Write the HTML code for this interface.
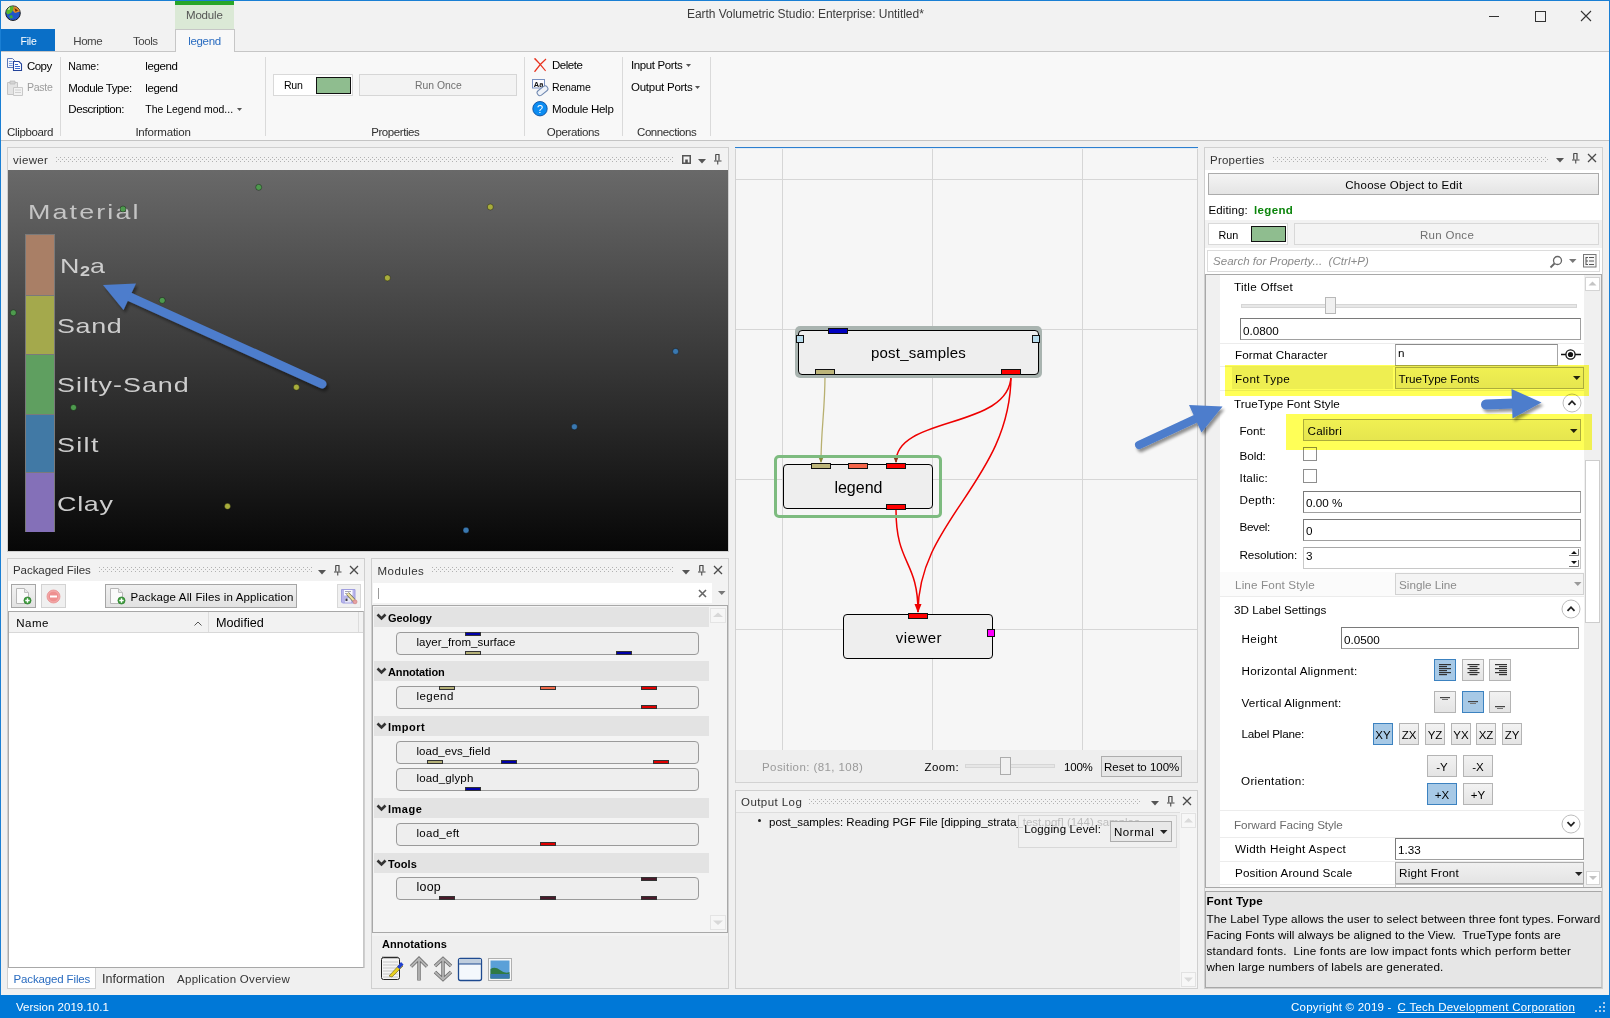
<!DOCTYPE html>
<html><head><meta charset="utf-8"><style>
html,body{margin:0;padding:0;}
body{width:1610px;height:1018px;overflow:hidden;position:relative;background:#f0f0f0;font-family:"Liberation Sans",sans-serif;}
.b{position:absolute;box-sizing:border-box;}
.t{position:absolute;white-space:pre;line-height:1;font-family:"Liberation Sans",sans-serif;}
svg{position:absolute;overflow:visible;}
.grip{position:absolute;background-image:radial-gradient(circle at 1px 1px,#a8a8a8 0.7px,transparent 0.9px),radial-gradient(circle at 3px 3px,#a8a8a8 0.7px,transparent 0.9px);background-size:4px 4px;}
</style></head><body>
<div class="b" style="left:0px;top:0px;width:1610px;height:1018px;background:#f0f0f0"></div>
<div class="b" style="left:1px;top:1px;width:1608px;height:50px;background:#f2f2f2"></div>
<div class="b" style="left:0px;top:0px;width:1610px;height:1px;background:#1a7fd4"></div>
<div class="b" style="left:0px;top:0px;width:1px;height:1018px;background:#1a7fd4"></div>
<div class="b" style="left:1609px;top:0px;width:1px;height:1018px;background:#1a7fd4"></div>
<svg style="left:5px;top:5px" width="16" height="16" viewBox="0 0 16 16">
<circle cx="8" cy="8.2" r="7.3" fill="#1f55c8" stroke="#111" stroke-width="0.9"/>
<path d="M1.2 7.5 A7 7 0 0 1 8 1 L9 4 L6 8 L2.5 9.5 Z" fill="#58b82a"/>
<path d="M2.5 4.5 A7 7 0 0 1 5 2 L4.5 5 Z" fill="#c8f0a0"/>
<path d="M8.5 1.2 A7 7 0 0 1 14.8 6.5 L10 8 L8 6 Z" fill="#e08a28"/>
<path d="M9.5 3 L13 5.5 L10.5 6.8 Z" fill="#6a2a08"/>
<path d="M4 11 L7 10 L8 13 L5.5 13.5 Z" fill="#3aa83a"/>
</svg>
<div class="t" id="t0" style="top:7.64px;font-size:12px;color:#3b3b3b;letter-spacing:-0.044px;left:687px;">Earth Volumetric Studio: Enterprise: Untitled*</div>
<div class="b" style="left:1489px;top:16px;width:10px;height:1px;background:#333"></div>
<div class="b" style="left:1535px;top:11px;width:11px;height:11px;border:1px solid #333"></div>
<svg style="left:1580px;top:10px" width="12" height="12" viewBox="0 0 12 12"><path d="M1 1 L11 11 M11 1 L1 11" stroke="#333" stroke-width="1.1"/></svg>
<div class="b" style="left:175px;top:1px;width:59px;height:4px;background:#29a629"></div>
<div class="b" style="left:175px;top:5px;width:59px;height:24px;background:#dbe9d6"></div>
<div class="t" id="t1" style="top:10.02px;font-size:11.5px;color:#555;letter-spacing:-0.184px;left:186px;">Module</div>
<div class="b" style="left:1px;top:51px;width:1608px;height:1px;background:#c6c6c6"></div>
<div class="b" style="left:1px;top:29px;width:54px;height:22px;background:#0a6fc7"></div>
<div class="t" id="t2" style="top:35.74px;font-size:10.58px;color:#fff;letter-spacing:-0.250px;left:20.5px;">File</div>
<div class="t" id="t3" style="top:35.72px;font-size:11.5px;color:#444;letter-spacing:-0.462px;left:73.3px;">Home</div>
<div class="t" id="t4" style="top:35.72px;font-size:11.5px;color:#444;letter-spacing:-0.440px;left:133px;">Tools</div>
<div class="b" style="left:175px;top:29px;width:60px;height:23px;background:#f8f8f8;border:1px solid #c6c6c6;border-bottom:none"></div>
<div class="t" id="t5" style="top:35.72px;font-size:11.5px;color:#2a6cc0;letter-spacing:-0.349px;left:188.3px;">legend</div>
<div class="b" style="left:1px;top:52px;width:1608px;height:88px;background:#f8f8f8"></div>
<div class="b" style="left:1px;top:140px;width:1608px;height:1px;background:#c4c4c4"></div>
<div class="b" style="left:60px;top:57px;width:1px;height:79px;background:#dadada"></div>
<div class="b" style="left:265px;top:57px;width:1px;height:79px;background:#dadada"></div>
<div class="b" style="left:524px;top:57px;width:1px;height:79px;background:#dadada"></div>
<div class="b" style="left:622px;top:57px;width:1px;height:79px;background:#dadada"></div>
<div class="b" style="left:710px;top:57px;width:1px;height:79px;background:#dadada"></div>
<svg style="left:7px;top:58px" width="16" height="14" viewBox="0 0 16 14">
<path d="M0.5 0.5 H5.5 L7.5 2.5 V9.5 H0.5 Z" fill="#f4f7fc" stroke="#5a78b8"/>
<path d="M2 3.5 H5.5 M2 5.5 H5.5 M2 7.5 H5.5" stroke="#7fa0e0"/>
<path d="M6.5 3.5 H12 L14.5 6 V12.5 H6.5 Z" fill="#fff" stroke="#23439a" stroke-width="1.1"/>
<path d="M8 6.5 H11 M8 8.5 H13 M8 10.5 H13" stroke="#3a6ad0"/>
</svg>
<div class="t" id="t6" style="top:60.62px;font-size:11.5px;color:#000;letter-spacing:-0.553px;left:27px;">Copy</div>
<svg style="left:7px;top:80px" width="17" height="16" viewBox="0 0 17 16">
<path d="M0.5 2.5 H10.5 V14.5 H0.5 Z" fill="#e4e4e4" stroke="#c4c4c4"/>
<path d="M3 1 H8 V4 H3 Z" fill="#d4d4d4" stroke="#bdbdbd" stroke-width="0.8"/>
<path d="M6.5 7.5 H15.5 V15.5 H6.5 Z" fill="#f2f2f2" stroke="#c8c8c8"/>
<path d="M8 10 H14 M8 12.5 H14" stroke="#d0d0d0"/>
</svg>
<div class="t" id="t7" style="top:82.04px;font-size:10.58px;color:#9c9c9c;letter-spacing:-0.317px;left:27px;">Paste</div>
<div class="t" id="t8" style="top:127.02px;font-size:11.5px;color:#2e2e2e;letter-spacing:-0.342px;left:7px;">Clipboard</div>
<div class="t" id="t9" style="top:61.34px;font-size:10.58px;color:#000;letter-spacing:-0.091px;left:68.3px;">Name:</div>
<div class="t" id="t10" style="top:61.32px;font-size:11.5px;color:#000;letter-spacing:-0.409px;left:145.3px;">legend</div>
<div class="t" id="t11" style="top:82.92px;font-size:11.5px;color:#000;letter-spacing:-0.449px;left:68.3px;">Module Type:</div>
<div class="t" id="t12" style="top:82.92px;font-size:11.5px;color:#000;letter-spacing:-0.409px;left:145.3px;">legend</div>
<div class="t" id="t13" style="top:104.02px;font-size:11.5px;color:#000;letter-spacing:-0.411px;left:68.3px;">Description:</div>
<div class="t" id="t14" style="top:105.05px;font-size:10.46px;color:#000;letter-spacing:-0.001px;left:145.3px;">The Legend mod...</div>
<svg style="left:237px;top:108px" width="6" height="4" viewBox="0 0 6 4"><path d="M0 0 H5 L2.5 3 Z" fill="#555"/></svg>
<div class="t" id="t15" style="top:127.02px;font-size:11.5px;color:#2e2e2e;letter-spacing:-0.213px;left:135.4px;">Information</div>
<div class="b" style="left:273px;top:74px;width:80px;height:22px;background:#fff;border:1px solid #d9d9d9"></div>
<div class="t" id="t16" style="top:80.24px;font-size:10.58px;color:#000;letter-spacing:-0.310px;left:284px;">Run</div>
<div class="b" style="left:316px;top:77px;width:35px;height:17px;background:#8fbd8f;border:1px solid #111"></div>
<div class="b" style="left:359px;top:74px;width:158px;height:22px;background:#f3f3f3;border:1px solid #d6d6d6"></div>
<div class="t" id="t17" style="top:81.20px;font-size:10.39px;color:#707070;letter-spacing:0.002px;left:415px;">Run Once</div>
<div class="t" id="t18" style="top:127.02px;font-size:11.5px;color:#2e2e2e;letter-spacing:-0.425px;left:371.2px;">Properties</div>
<svg style="left:533px;top:58px" width="15" height="15" viewBox="0 0 15 15"><path d="M0.8 0.8 Q6 5.5 12.2 13.2 L13 12.4 Q7 5 2.3 0 Z M12.6 0.6 Q6 6 0.9 13.6 L2.2 14 Q7.5 6.5 13.4 1.6 Z" fill="#e8321e"/></svg>
<div class="t" id="t19" style="top:59.92px;font-size:11.5px;color:#000;letter-spacing:-0.490px;left:552px;">Delete</div>
<svg style="left:532px;top:79px" width="17" height="17" viewBox="0 0 17 17">
<rect x="0.5" y="0.5" width="12" height="8.5" fill="#fbfbff" stroke="#7890c0"/>
<text x="1.8" y="7.6" font-size="7.5" font-family="Liberation Sans" font-weight="bold" fill="#111">Aa</text>
<rect x="4.5" y="9" width="12" height="5.5" rx="2.5" transform="rotate(-38 10.5 11.75)" fill="#eef2f8" stroke="#7088b0"/>
</svg>
<div class="t" id="t20" style="top:81.74px;font-size:10.58px;color:#000;letter-spacing:-0.238px;left:552px;">Rename</div>
<svg style="left:532px;top:101px" width="17" height="17" viewBox="0 0 17 17">
<circle cx="8" cy="7.7" r="7.2" fill="#0b8cf2" stroke="#0f4f9e" stroke-width="0.9"/>
<text x="8" y="12" font-size="11" font-family="Liberation Sans" fill="#fff" text-anchor="middle">?</text>
</svg>
<div class="t" id="t21" style="top:104.02px;font-size:11.5px;color:#000;letter-spacing:-0.278px;left:552px;">Module Help</div>
<div class="t" id="t22" style="top:127.02px;font-size:11.5px;color:#2e2e2e;letter-spacing:-0.363px;left:546.8px;">Operations</div>
<div class="t" id="t23" style="top:59.92px;font-size:11.5px;color:#000;letter-spacing:-0.383px;left:631px;">Input Ports</div>
<svg style="left:686px;top:64px" width="6" height="4" viewBox="0 0 6 4"><path d="M0 0 H5 L2.5 3 Z" fill="#555"/></svg>
<div class="t" id="t24" style="top:81.72px;font-size:11.5px;color:#000;letter-spacing:-0.251px;left:631px;">Output Ports</div>
<svg style="left:695px;top:86px" width="6" height="4" viewBox="0 0 6 4"><path d="M0 0 H5 L2.5 3 Z" fill="#555"/></svg>
<div class="t" id="t25" style="top:127.02px;font-size:11.5px;color:#2e2e2e;letter-spacing:-0.414px;left:637px;">Connections</div>
<svg style="left:0;top:0" width="0" height="0"><defs><pattern id="gp" x="0" y="0" width="4" height="4" patternUnits="userSpaceOnUse"><rect x="0" y="0" width="1" height="1" fill="#b2b2b2"/><rect x="2" y="2" width="1" height="1" fill="#b2b2b2"/></pattern></defs></svg>
<div class="b" style="left:7px;top:147px;width:722px;height:405px;background:#f2f2f2;border:1px solid #cfcfcf"></div>
<div class="t" id="t26" style="top:155.02px;font-size:11.5px;color:#333;letter-spacing:0.313px;left:13px;">viewer</div>
<svg style="left:56px;top:157px" width="617" height="5"><rect width="617" height="5" fill="url(#gp)"/></svg>
<svg style="left:682px;top:155px" width="9" height="9" viewBox="0 0 9 9"><rect x="0.75" y="0.75" width="7.5" height="7.5" fill="none" stroke="#555" stroke-width="1.5"/><rect x="3.2" y="4.5" width="2.6" height="4" fill="#555"/></svg>
<svg style="left:698px;top:159px" width="9" height="5" viewBox="0 0 9 5"><path d="M0 0 H8 L4 4.5 Z" fill="#555"/></svg>
<svg style="left:714px;top:154px" width="8" height="11" viewBox="0 0 8 11"><path d="M1.5 0.5 H5.5 M1.75 0.5 V6.5 M5 0.5 V6.5" stroke="#4a4a4a" stroke-width="1.2" fill="none"/><path d="M0 7 H7.5 M3.75 7 V10.5" stroke="#4a4a4a" stroke-width="1.1"/></svg>
<div class="b" style="left:8px;top:170px;width:720px;height:381px;background:linear-gradient(#696969,#070707)"></div>
<div class="b" style="left:25px;top:234px;width:30px;height:298px;background:#7a7a7a"></div>
<div class="b" style="left:26px;top:235px;width:28px;height:59.5px;background:#a97f66"></div>
<div class="b" style="left:26px;top:295.5px;width:28px;height:58.0px;background:#a4a94c"></div>
<div class="b" style="left:26px;top:354.5px;width:28px;height:59.0px;background:#5f9f60"></div>
<div class="b" style="left:26px;top:414.5px;width:28px;height:57.5px;background:#4179a5"></div>
<div class="b" style="left:26px;top:473px;width:28px;height:58.5px;background:#8470b8"></div>
<div class="t" id="t27" style="top:201.02px;font-size:21px;color:#c4c4c4;letter-spacing:1.661px;transform:scaleX(1.28);transform-origin:0 0;left:28.3px;">Material</div>
<div class="t" id="t28" style="top:255.02px;font-size:21px;color:#cdcdcd;transform:scaleX(1.28);transform-origin:0 0;left:59.9px;">N</div>
<div class="t" id="t29" style="top:264.05px;font-size:14px;color:#cdcdcd;transform:scaleX(1.28);transform-origin:0 0;left:80px;font-weight:bold">2</div>
<div class="t" id="t30" style="top:255.02px;font-size:21px;color:#cdcdcd;transform:scaleX(1.28);transform-origin:0 0;left:90px;">a</div>
<div class="t" id="t31" style="top:315.02px;font-size:21px;color:#cdcdcd;letter-spacing:0.526px;transform:scaleX(1.28);transform-origin:0 0;left:57.4px;">Sand</div>
<div class="t" id="t32" style="top:374.02px;font-size:21px;color:#cdcdcd;letter-spacing:0.806px;transform:scaleX(1.28);transform-origin:0 0;left:57.4px;">Silty-Sand</div>
<div class="t" id="t33" style="top:433.62px;font-size:21px;color:#cdcdcd;letter-spacing:1.052px;transform:scaleX(1.28);transform-origin:0 0;left:57.4px;">Silt</div>
<div class="t" id="t34" style="top:493.02px;font-size:21px;color:#cdcdcd;letter-spacing:0.578px;transform:scaleX(1.28);transform-origin:0 0;left:57.4px;">Clay</div>
<svg style="left:0;top:0" width="1610" height="1018"><circle cx="258.7" cy="187.3" r="3" fill="#4e9a4e" stroke="rgba(0,0,0,0.45)" stroke-width="0.8"/><circle cx="490.3" cy="207" r="3" fill="#a8ad3c" stroke="rgba(0,0,0,0.45)" stroke-width="0.8"/><circle cx="387.4" cy="277.9" r="3" fill="#a8ad3c" stroke="rgba(0,0,0,0.45)" stroke-width="0.8"/><circle cx="162.2" cy="300.4" r="3" fill="#4e9a4e" stroke="rgba(0,0,0,0.45)" stroke-width="0.8"/><circle cx="13.3" cy="312.8" r="3" fill="#4e9a4e" stroke="rgba(0,0,0,0.45)" stroke-width="0.8"/><circle cx="296.4" cy="387.2" r="3" fill="#a8ad3c" stroke="rgba(0,0,0,0.45)" stroke-width="0.8"/><circle cx="675.6" cy="351.4" r="3" fill="#3a78b0" stroke="rgba(0,0,0,0.45)" stroke-width="0.8"/><circle cx="73.5" cy="407.5" r="3" fill="#4e9a4e" stroke="rgba(0,0,0,0.45)" stroke-width="0.8"/><circle cx="574.4" cy="426.8" r="3" fill="#3a78b0" stroke="rgba(0,0,0,0.45)" stroke-width="0.8"/><circle cx="227.5" cy="506.3" r="3" fill="#a8ad3c" stroke="rgba(0,0,0,0.45)" stroke-width="0.8"/><circle cx="466" cy="530.2" r="3" fill="#3a78b0" stroke="rgba(0,0,0,0.45)" stroke-width="0.8"/><circle cx="123" cy="209" r="3" fill="#4e9a4e" stroke="rgba(0,0,0,0.45)" stroke-width="0.8"/></svg>
<div class="b" style="left:7px;top:558px;width:358px;height:410px;background:#f2f2f2;border:1px solid #cfcfcf"></div>
<div class="t" id="t35" style="top:565.42px;font-size:11.5px;color:#333;letter-spacing:-0.063px;left:13px;">Packaged Files</div>
<svg style="left:99px;top:567px" width="213" height="5"><rect width="213" height="5" fill="url(#gp)"/></svg>
<svg style="left:318px;top:570px" width="9" height="5" viewBox="0 0 9 5"><path d="M0 0 H8 L4 4.5 Z" fill="#555"/></svg>
<svg style="left:334px;top:565px" width="8" height="11" viewBox="0 0 8 11"><path d="M1.5 0.5 H5.5 M1.75 0.5 V6.5 M5 0.5 V6.5" stroke="#4a4a4a" stroke-width="1.2" fill="none"/><path d="M0 7 H7.5 M3.75 7 V10.5" stroke="#4a4a4a" stroke-width="1.1"/></svg>
<svg style="left:349px;top:565px" width="10" height="10" viewBox="0 0 10 10"><path d="M1 1 L9 9 M9 1 L1 9" stroke="#4a4a4a" stroke-width="1.3"/></svg>
<div class="b" style="left:8px;top:581px;width:356px;height:30px;background:#fff"></div>
<div class="b" style="left:11px;top:584px;width:25px;height:24px;background:linear-gradient(#f2f2f2,#e2e2e2);border:1px solid #a6a6a6"></div>
<svg style="left:16px;top:588px" width="16" height="17" viewBox="0 0 16 17">
<path d="M0.5 0.5 H8.5 L12.5 4.5 V15.5 H0.5 Z" fill="#fafafa" stroke="#b8b8b8"/>
<path d="M8.5 0.5 V4.5 H12.5" fill="#e8e8e8" stroke="#c0c0c0"/>
<circle cx="11.5" cy="12.5" r="3.6" fill="#3a9a3a" stroke="#2a7a2a" stroke-width="0.6"/>
<path d="M11.5 10.3 V14.7 M9.3 12.5 H13.7" stroke="#fff" stroke-width="1.4"/>
</svg>
<div class="b" style="left:41px;top:584px;width:25px;height:24px;background:#f0f0f0;border:1px solid #d2d2d2"></div>
<svg style="left:46px;top:589px" width="15" height="15" viewBox="0 0 15 15">
<circle cx="7.5" cy="7.5" r="6.5" fill="#f2a6a6" stroke="#e89090" stroke-width="0.8"/>
<circle cx="7.5" cy="7.5" r="4.8" fill="#ee8f8f"/>
<rect x="4" y="6.5" width="7" height="2" fill="#fff"/>
</svg>
<div class="b" style="left:105px;top:584px;width:192px;height:24px;background:linear-gradient(#f0f0f0,#e2e2e2);border:1px solid #a6a6a6"></div>
<svg style="left:110px;top:588px" width="16" height="17" viewBox="0 0 16 17">
<path d="M0.5 0.5 H8.5 L12.5 4.5 V15.5 H0.5 Z" fill="#fafafa" stroke="#b8b8b8"/>
<path d="M8.5 0.5 V4.5 H12.5" fill="#e8e8e8" stroke="#c0c0c0"/>
<circle cx="11.5" cy="12.5" r="3.6" fill="#3a9a3a" stroke="#2a7a2a" stroke-width="0.6"/>
<path d="M11.5 10.3 V14.7 M9.3 12.5 H13.7" stroke="#fff" stroke-width="1.4"/>
</svg>
<div class="t" id="t36" style="top:591.72px;font-size:11.5px;color:#000;letter-spacing:0.144px;left:130.4px;">Package All Files in Application</div>
<div class="b" style="left:337px;top:584px;width:24px;height:24px;background:#f0f0f0;border:1px solid #d8d8d8"></div>
<svg style="left:341px;top:589px" width="17" height="16" viewBox="0 0 17 16">
<path d="M0.5 0.5 H14 V13 L13 14 H1.5 L0.5 13 Z" fill="#b8b6ec" stroke="#a09ee0"/>
<rect x="3" y="1" width="8.5" height="5.5" fill="#fcfcff"/>
<path d="M4 2.5 H10 M4 4.5 H7" stroke="#9090a8" stroke-width="0.8"/>
<rect x="4" y="9" width="6" height="4.5" fill="#e6e6f6"/>
<rect x="4.5" y="9.5" width="2" height="2.5" fill="#404050"/>
<path d="M6.5 4.5 L13 11.5" stroke="#6a6a50" stroke-width="3.6"/>
<path d="M6.5 4.5 L13 11.5" stroke="#eee0a0" stroke-width="2.4"/>
<circle cx="14" cy="12.8" r="2" fill="#e8a0a0" stroke="#c87878" stroke-width="0.6"/>
</svg>
<div class="b" style="left:8px;top:611px;width:356px;height:357px;background:#fff;border:1px solid #a8a8a8;border-right-color:#c8c8c8"></div>
<div class="b" style="left:9px;top:612px;width:354px;height:20px;background:#f2f2f2"></div>
<div class="b" style="left:9px;top:632px;width:354px;height:1px;background:#d8d8d8"></div>
<div class="t" id="t37" style="top:618.02px;font-size:11.5px;color:#000;letter-spacing:0.537px;left:16.2px;">Name</div>
<svg style="left:194px;top:621px" width="8" height="5" viewBox="0 0 8 5"><path d="M0.5 4.5 L4 1 L7.5 4.5" stroke="#555" fill="none" stroke-width="1"/></svg>
<div class="b" style="left:208px;top:612px;width:1px;height:20px;background:#dcdcdc"></div>
<div class="b" style="left:358px;top:612px;width:1px;height:20px;background:#dcdcdc"></div>
<div class="t" id="t38" style="top:616.74px;font-size:12.65px;color:#000;letter-spacing:-0.002px;left:216px;">Modified</div>
<div class="b" style="left:7px;top:968px;width:89px;height:21px;background:#fff;border:1px solid #d0d0d0;border-top:none"></div>
<div class="t" id="t39" style="top:974.02px;font-size:11.5px;color:#2a6cc0;letter-spacing:-0.140px;left:13.5px;">Packaged Files</div>
<div class="t" id="t40" style="top:973.03px;font-size:12.55px;color:#333;letter-spacing:0.002px;left:102px;">Information</div>
<div class="t" id="t41" style="top:974.02px;font-size:11.5px;color:#333;letter-spacing:0.285px;left:177px;">Application Overview</div>
<div class="b" style="left:371px;top:558px;width:358px;height:431px;background:#f2f2f2;border:1px solid #cfcfcf"></div>
<div class="t" id="t42" style="top:565.82px;font-size:11.5px;color:#333;letter-spacing:0.472px;left:377.5px;">Modules</div>
<svg style="left:432px;top:567px" width="241" height="5"><rect width="241" height="5" fill="url(#gp)"/></svg>
<svg style="left:682px;top:570px" width="9" height="5" viewBox="0 0 9 5"><path d="M0 0 H8 L4 4.5 Z" fill="#555"/></svg>
<svg style="left:698px;top:565px" width="8" height="11" viewBox="0 0 8 11"><path d="M1.5 0.5 H5.5 M1.75 0.5 V6.5 M5 0.5 V6.5" stroke="#4a4a4a" stroke-width="1.2" fill="none"/><path d="M0 7 H7.5 M3.75 7 V10.5" stroke="#4a4a4a" stroke-width="1.1"/></svg>
<svg style="left:713px;top:565px" width="10" height="10" viewBox="0 0 10 10"><path d="M1 1 L9 9 M9 1 L1 9" stroke="#4a4a4a" stroke-width="1.3"/></svg>
<div class="b" style="left:373px;top:583px;width:339px;height:20px;background:#fff"></div>
<div class="b" style="left:378px;top:588px;width:1px;height:11px;background:#9a9a9a"></div>
<svg style="left:698px;top:589px" width="9" height="9" viewBox="0 0 9 9"><path d="M1 1 L8 8 M8 1 L1 8" stroke="#666" stroke-width="1.6"/></svg>
<svg style="left:718px;top:591px" width="8" height="5" viewBox="0 0 8 5"><path d="M0 0 H7.5 L3.75 4 Z" fill="#777"/></svg>
<div class="b" style="left:372px;top:605px;width:356px;height:328px;background:#f4f4f4;border:1px solid #a8a8a8"></div>
<div class="b" style="left:374px;top:607px;width:335px;height:20px;background:#e3e3e3"></div>
<svg style="left:376px;top:613px" width="11" height="8" viewBox="0 0 11 8"><path d="M1.5 1.5 L5.5 5.5 L9.5 1.5" stroke="#333" stroke-width="2.6" fill="none"/></svg>
<div class="t" id="t43" style="top:613.04px;font-size:11px;color:#000;font-weight:bold;letter-spacing:-0.036px;left:388px;">Geology</div>
<div class="b" style="left:396px;top:632px;width:303px;height:23px;background:#eeeeee;border:1px solid #9a9a9a;border-radius:4px"></div>
<div class="t" id="t44" style="top:637.02px;font-size:11.5px;color:#000;letter-spacing:0.021px;left:416.5px;">layer_from_surface</div>
<div class="b" style="left:465px;top:632px;width:16px;height:4px;background:#0000a8;border:1px solid #333"></div>
<div class="b" style="left:465px;top:651px;width:16px;height:4px;background:#b4b078;border:1px solid #333"></div>
<div class="b" style="left:616px;top:651px;width:16px;height:4px;background:#0000a8;border:1px solid #333"></div>
<div class="b" style="left:374px;top:661px;width:335px;height:20px;background:#e3e3e3"></div>
<svg style="left:376px;top:667px" width="11" height="8" viewBox="0 0 11 8"><path d="M1.5 1.5 L5.5 5.5 L9.5 1.5" stroke="#333" stroke-width="2.6" fill="none"/></svg>
<div class="t" id="t45" style="top:667.04px;font-size:11px;color:#000;font-weight:bold;letter-spacing:-0.139px;left:388px;">Annotation</div>
<div class="b" style="left:396px;top:686px;width:303px;height:23px;background:#eeeeee;border:1px solid #9a9a9a;border-radius:4px"></div>
<div class="t" id="t46" style="top:691.02px;font-size:11.5px;color:#000;letter-spacing:0.451px;left:416.5px;">legend</div>
<div class="b" style="left:439px;top:686px;width:16px;height:4px;background:#b4b078;border:1px solid #333"></div>
<div class="b" style="left:540px;top:686px;width:16px;height:4px;background:#f06a4a;border:1px solid #333"></div>
<div class="b" style="left:641px;top:686px;width:16px;height:4px;background:#e00000;border:1px solid #333"></div>
<div class="b" style="left:641px;top:705px;width:16px;height:4px;background:#e00000;border:1px solid #333"></div>
<div class="b" style="left:374px;top:716px;width:335px;height:20px;background:#e3e3e3"></div>
<svg style="left:376px;top:722px" width="11" height="8" viewBox="0 0 11 8"><path d="M1.5 1.5 L5.5 5.5 L9.5 1.5" stroke="#333" stroke-width="2.6" fill="none"/></svg>
<div class="t" id="t47" style="top:722.04px;font-size:11px;color:#000;font-weight:bold;letter-spacing:0.513px;left:388px;">Import</div>
<div class="b" style="left:396px;top:741px;width:303px;height:23px;background:#eeeeee;border:1px solid #9a9a9a;border-radius:4px"></div>
<div class="t" id="t48" style="top:746.02px;font-size:11.5px;color:#000;letter-spacing:0.021px;left:416.5px;">load_evs_field</div>
<div class="b" style="left:427px;top:760px;width:16px;height:4px;background:#b4b078;border:1px solid #333"></div>
<div class="b" style="left:501px;top:760px;width:16px;height:4px;background:#0000a8;border:1px solid #333"></div>
<div class="b" style="left:653px;top:760px;width:16px;height:4px;background:#e00000;border:1px solid #333"></div>
<div class="b" style="left:396px;top:768px;width:303px;height:23px;background:#eeeeee;border:1px solid #9a9a9a;border-radius:4px"></div>
<div class="t" id="t49" style="top:773.02px;font-size:11.5px;color:#000;letter-spacing:0.129px;left:416.5px;">load_glyph</div>
<div class="b" style="left:465px;top:787px;width:16px;height:4px;background:#0000a8;border:1px solid #333"></div>
<div class="b" style="left:374px;top:798px;width:335px;height:20px;background:#e3e3e3"></div>
<svg style="left:376px;top:804px" width="11" height="8" viewBox="0 0 11 8"><path d="M1.5 1.5 L5.5 5.5 L9.5 1.5" stroke="#333" stroke-width="2.6" fill="none"/></svg>
<div class="t" id="t50" style="top:804.04px;font-size:11px;color:#000;font-weight:bold;letter-spacing:0.501px;left:388px;">Image</div>
<div class="b" style="left:396px;top:823px;width:303px;height:23px;background:#eeeeee;border:1px solid #9a9a9a;border-radius:4px"></div>
<div class="t" id="t51" style="top:828.02px;font-size:11.5px;color:#000;letter-spacing:0.266px;left:416.5px;">load_eft</div>
<div class="b" style="left:540px;top:842px;width:16px;height:4px;background:#e00000;border:1px solid #333"></div>
<div class="b" style="left:374px;top:853px;width:335px;height:20px;background:#e3e3e3"></div>
<svg style="left:376px;top:859px" width="11" height="8" viewBox="0 0 11 8"><path d="M1.5 1.5 L5.5 5.5 L9.5 1.5" stroke="#333" stroke-width="2.6" fill="none"/></svg>
<div class="t" id="t52" style="top:859.04px;font-size:11px;color:#000;font-weight:bold;letter-spacing:0.071px;left:388px;">Tools</div>
<div class="b" style="left:396px;top:877px;width:303px;height:23px;background:#eeeeee;border:1px solid #9a9a9a;border-radius:4px"></div>
<div class="t" id="t53" style="top:881.04px;font-size:12.42px;color:#000;letter-spacing:0.270px;left:416.5px;">loop</div>
<div class="b" style="left:641px;top:877px;width:16px;height:4px;background:#4a1a2a;border:1px solid #333"></div>
<div class="b" style="left:439px;top:896px;width:16px;height:4px;background:#4a1a2a;border:1px solid #333"></div>
<div class="b" style="left:540px;top:896px;width:16px;height:4px;background:#4a1a2a;border:1px solid #333"></div>
<div class="b" style="left:641px;top:896px;width:16px;height:4px;background:#4a1a2a;border:1px solid #333"></div>
<div class="b" style="left:710px;top:608px;width:16px;height:15px;background:#f6f6f6;border:1px solid #e4e4e4"></div>
<svg style="left:710px;top:608px" width="16" height="15" viewBox="0 0 16 15"><path d="M3 9 L8 4.5 L13 9 Z" fill="#d8d8d8"/></svg>
<div class="b" style="left:710px;top:915px;width:16px;height:15px;background:#f6f6f6;border:1px solid #e4e4e4"></div>
<svg style="left:710px;top:915px" width="16" height="15" viewBox="0 0 16 15"><path d="M3 5.5 L8 10 L13 5.5 Z" fill="#d8d8d8"/></svg>
<div class="b" style="left:372px;top:936px;width:356px;height:52px;background:#efefef"></div>
<div class="t" id="t54" style="top:939.04px;font-size:11px;color:#000;font-weight:bold;letter-spacing:0.063px;left:382px;">Annotations</div>
<svg style="left:380px;top:955px" width="140" height="27" viewBox="0 0 140 27">
<rect x="1.5" y="2.5" width="18" height="22" rx="2" fill="#f4f4f4" stroke="#222"/>
<path d="M3 7 H18 M3 10 H18 M3 13 H18 M3 16 H18 M3 19 H18 M3 22 H18" stroke="#bbb" stroke-width="0.8"/>
<path d="M2.5 2.5 H18.5" stroke="#333" stroke-width="2" stroke-dasharray="1 1"/>
<path d="M9 21 L20 9 L23 11 L12 22 Z" fill="#e8d020" stroke="#554400" stroke-width="0.5"/>
<path d="M17 12 L21 7 L23.5 9.5 L19.5 14 Z" fill="#2040d0"/>
<path d="M31 11.5 L39 3.5 L47 11.5 M39 4 V25.5" stroke="#6a6a6a" stroke-width="3.4" fill="none"/><path d="M31 11.5 L39 3.5 L47 11.5 M39 4 V25.5" stroke="#b4b4b4" stroke-width="1.8" fill="none"/>
<path d="M55 11 L63 3.5 L71 11 M55 17 L63 24.5 L71 17 M63 4 V24" stroke="#6a6a6a" stroke-width="3.4" fill="none"/><path d="M55 11 L63 3.5 L71 11 M55 17 L63 24.5 L71 17 M63 4 V24" stroke="#b4b4b4" stroke-width="1.8" fill="none"/>
<rect x="78.5" y="3.5" width="23" height="22" rx="2" fill="#f4f8fc" stroke="#1e4a90" stroke-width="1.3"/>
<rect x="79" y="4" width="22" height="5" fill="#c0cede"/>
<path d="M79 9 H101" stroke="#1e4a90"/>
<rect x="108.5" y="3.5" width="23" height="22" fill="#f8f8f8" stroke="#b0b0b0"/>
<rect x="110.5" y="5.5" width="19" height="18" fill="#5aa0d8"/>
<path d="M110.5 14 Q115 11 120 15 T129.5 17 V23.5 H110.5 Z" fill="#2f7a45"/>
<rect x="110.5" y="19" width="19" height="4.5" fill="#3878b0"/>
</svg>
<div class="b" style="left:735px;top:147px;width:463px;height:636px;background:#f6f6f6;border:1px solid #d2d2d2;border-top:none"></div>
<div class="b" style="left:735px;top:147px;width:463px;height:1px;background:#2b7fd0"></div>
<div class="b" style="left:735px;top:148px;width:463px;height:1px;background:#e2ebf3"></div>
<svg style="left:0;top:0" width="1610" height="1018"><rect x="782" y="149" width="1" height="601" fill="#d6d6d6"/><rect x="932" y="149" width="1" height="601" fill="#d6d6d6"/><rect x="1082" y="149" width="1" height="601" fill="#d6d6d6"/><rect x="736" y="179" width="461" height="1" fill="#d6d6d6"/><rect x="736" y="329" width="461" height="1" fill="#d6d6d6"/><rect x="736" y="479" width="461" height="1" fill="#d6d6d6"/><rect x="736" y="629" width="461" height="1" fill="#d6d6d6"/></svg>
<div class="b" style="left:736px;top:750px;width:461px;height:32px;background:#eeeeee"></div>
<div class="t" id="t55" style="top:762.02px;font-size:11.5px;color:#9a9a9a;letter-spacing:0.414px;left:762px;">Position: (81, 108)</div>
<div class="t" id="t56" style="top:762.02px;font-size:11.5px;color:#000;letter-spacing:0.402px;left:924.6px;">Zoom:</div>
<div class="b" style="left:965px;top:764px;width:90px;height:4px;background:#e6e6e6;border:1px solid #d6d6d6"></div>
<div class="b" style="left:1000px;top:757px;width:11px;height:18px;background:#f0f0f0;border:1px solid #acacac"></div>
<div class="t" id="t57" style="top:762.02px;font-size:11.5px;color:#000;letter-spacing:-0.207px;left:1064px;">100%</div>
<div class="b" style="left:1101px;top:756px;width:81px;height:21px;background:#e6e6e6;border:1px solid #adadad"></div>
<div class="t" id="t58" style="top:762.02px;font-size:11.5px;color:#000;letter-spacing:-0.011px;left:1104px;">Reset to 100%</div>
<svg style="left:0;top:0" width="1610" height="1018">
<path d="M825 375 C825 410 821 430 821 462" stroke="#b8b070" stroke-width="1.3" fill="none"/>
<path d="M817.5 455 L821 463 L824.5 455 Z" fill="#8a8a3a"/>
<path d="M1011 375 C1011 430 896 415 896 462" stroke="#ee0000" stroke-width="1.5" fill="none"/>
<path d="M892.5 455 L896 463 L899.5 455 Z" fill="#8a3a1a"/>
<path d="M896 510 C896 565 918 560 918 612" stroke="#ee0000" stroke-width="1.5" fill="none"/>
<path d="M1011 375 C1011 480 918 520 918 612" stroke="#ee0000" stroke-width="1.5" fill="none"/>
<path d="M914.5 604 L918 613 L921.5 604 Z" fill="#ee0000"/>
</svg>
<div class="b" style="left:795px;top:326px;width:247px;height:52px;background:#a9b4b0;border-radius:5px"></div>
<div class="b" style="left:798px;top:329.5px;width:241px;height:45px;background:#eeeeee;border:1px solid #000;border-radius:4px"></div>
<div class="b" style="left:828px;top:328px;width:20px;height:6px;background:#0000c0;border:1px solid #111"></div>
<div class="b" style="left:815px;top:369px;width:20px;height:6px;background:#bdb57a;border:1px solid #111"></div>
<div class="b" style="left:1001px;top:369px;width:20px;height:6px;background:#ff0000;border:1px solid #111"></div>
<div class="b" style="left:796px;top:335px;width:8px;height:8px;background:#b8dcec;border:1px solid #111"></div>
<div class="b" style="left:1032px;top:335px;width:8px;height:8px;background:#b8dcec;border:1px solid #111"></div>
<div class="t" id="t59" style="top:345.00px;font-size:15px;color:#000;letter-spacing:0.203px;left:871px;">post_samples</div>
<div class="b" style="left:774px;top:455px;width:168px;height:63px;border:3.5px solid #7dbb7f;border-radius:5px"></div>
<div class="b" style="left:783px;top:464px;width:150px;height:45px;background:#eeeeee;border:1px solid #000;border-radius:4px"></div>
<div class="b" style="left:811px;top:463px;width:20px;height:6px;background:#bdb57a;border:1px solid #111"></div>
<div class="b" style="left:848px;top:463px;width:20px;height:6px;background:#f4664a;border:1px solid #111"></div>
<div class="b" style="left:886px;top:463px;width:20px;height:6px;background:#ff0000;border:1px solid #111"></div>
<div class="b" style="left:886px;top:504px;width:20px;height:6px;background:#ff0000;border:1px solid #111"></div>
<div class="t" id="t60" style="top:478.81px;font-size:16.05px;color:#000;letter-spacing:-0.000px;left:834.4px;">legend</div>
<div class="b" style="left:843px;top:614px;width:150px;height:45px;background:#eeeeee;border:1px solid #000;border-radius:4px"></div>
<div class="b" style="left:908px;top:613px;width:20px;height:6px;background:#ff0000;border:1px solid #111"></div>
<div class="b" style="left:987px;top:629px;width:8px;height:8px;background:#ff00ff;border:1px solid #111"></div>
<div class="t" id="t61" style="top:629.60px;font-size:15px;color:#000;letter-spacing:0.488px;left:895.8px;">viewer</div>
<div class="b" style="left:735px;top:790px;width:463px;height:199px;background:#f2f2f2;border:1px solid #cfcfcf"></div>
<div class="t" id="t62" style="top:797.02px;font-size:11.5px;color:#333;letter-spacing:0.433px;left:741px;">Output Log</div>
<svg style="left:809px;top:799px" width="332" height="5"><rect width="332" height="5" fill="url(#gp)"/></svg>
<svg style="left:1151px;top:801px" width="9" height="5" viewBox="0 0 9 5"><path d="M0 0 H8 L4 4.5 Z" fill="#555"/></svg>
<svg style="left:1167px;top:796px" width="8" height="11" viewBox="0 0 8 11"><path d="M1.5 0.5 H5.5 M1.75 0.5 V6.5 M5 0.5 V6.5" stroke="#4a4a4a" stroke-width="1.2" fill="none"/><path d="M0 7 H7.5 M3.75 7 V10.5" stroke="#4a4a4a" stroke-width="1.1"/></svg>
<svg style="left:1182px;top:796px" width="10" height="10" viewBox="0 0 10 10"><path d="M1 1 L9 9 M9 1 L1 9" stroke="#4a4a4a" stroke-width="1.3"/></svg>
<div class="b" style="left:736px;top:812px;width:444px;height:176px;background:#efefef"></div>
<div class="b" style="left:736px;top:812px;width:461px;height:1px;background:#dddddd"></div>
<div class="b" style="left:1180px;top:812px;width:17px;height:176px;background:#f5f5f5"></div>
<div class="b" style="left:1181px;top:813px;width:15px;height:15px;background:#f7f7f7;border:1px solid #e2e2e2"></div>
<svg style="left:1181px;top:813px" width="15" height="15" viewBox="0 0 15 15"><path d="M3 9.5 L7.5 5 L12 9.5 Z" fill="#dadada"/></svg>
<div class="b" style="left:1181px;top:972px;width:15px;height:15px;background:#f7f7f7;border:1px solid #e2e2e2"></div>
<svg style="left:1181px;top:972px" width="15" height="15" viewBox="0 0 15 15"><path d="M3 5.5 L7.5 10 L12 5.5 Z" fill="#dadada"/></svg>
<div class="b" style="left:758px;top:819px;width:3px;height:3px;background:#222;border-radius:50%"></div>
<div class="t" id="t63" style="top:817.42px;font-size:11.5px;color:#000;left:769px;">post_samples: Reading PGF File [dipping_strata_test.pgf] (144) samples</div>
<div class="b" style="left:1018px;top:815px;width:159px;height:33px;background:rgba(240,240,240,0.78);border:1px solid #d8d8d8"></div>
<div class="t" id="t64" style="top:824.02px;font-size:11.5px;color:#000;letter-spacing:0.153px;left:1024.2px;">Logging Level:</div>
<div class="b" style="left:1110px;top:821px;width:62px;height:21px;background:#e8e8e8;border:1px solid #adadad"></div>
<div class="t" id="t65" style="top:826.82px;font-size:11.5px;color:#000;letter-spacing:0.547px;left:1114px;">Normal</div>
<svg style="left:1160px;top:830px" width="8" height="5" viewBox="0 0 8 5"><path d="M0 0 H7.5 L3.75 4 Z" fill="#222"/></svg>
<div class="b" style="left:1204px;top:147px;width:399px;height:842px;background:#f2f2f2;border:1px solid #cfcfcf"></div>
<div class="t" id="t66" style="top:155.02px;font-size:11.5px;color:#333;letter-spacing:0.209px;left:1210px;">Properties</div>
<svg style="left:1273px;top:157px" width="275" height="5"><rect width="275" height="5" fill="url(#gp)"/></svg>
<svg style="left:1556px;top:158px" width="9" height="5" viewBox="0 0 9 5"><path d="M0 0 H8 L4 4.5 Z" fill="#555"/></svg>
<svg style="left:1572px;top:153px" width="8" height="11" viewBox="0 0 8 11"><path d="M1.5 0.5 H5.5 M1.75 0.5 V6.5 M5 0.5 V6.5" stroke="#4a4a4a" stroke-width="1.2" fill="none"/><path d="M0 7 H7.5 M3.75 7 V10.5" stroke="#4a4a4a" stroke-width="1.1"/></svg>
<svg style="left:1587px;top:153px" width="10" height="10" viewBox="0 0 10 10"><path d="M1 1 L9 9 M9 1 L1 9" stroke="#4a4a4a" stroke-width="1.3"/></svg>
<div class="b" style="left:1205px;top:170px;width:397px;height:104px;background:#fff"></div>
<div class="b" style="left:1208px;top:173px;width:391px;height:22px;background:linear-gradient(#f4f4f4,#e4e4e4);border:1px solid #ababab"></div>
<div class="t" id="t67" style="top:180.42px;font-size:11.5px;color:#000;letter-spacing:0.246px;left:1345.3px;">Choose Object to Edit</div>
<div class="t" id="t68" style="top:205.02px;font-size:11.5px;color:#000;letter-spacing:0.134px;left:1208.5px;">Editing:</div>
<div class="t" id="t69" style="top:205.02px;font-size:11.5px;color:#0b850b;font-weight:bold;letter-spacing:0.347px;left:1254px;">legend</div>
<div class="b" style="left:1205px;top:220px;width:397px;height:28px;background:#f2f2f2"></div>
<div class="b" style="left:1208px;top:223px;width:80px;height:22px;background:#fff;border:1px solid #d9d9d9"></div>
<div class="t" id="t70" style="top:230.02px;font-size:10.79px;color:#000;letter-spacing:-0.003px;left:1218.5px;">Run</div>
<div class="b" style="left:1251px;top:226px;width:35px;height:16px;background:#8fbd8f;border:1px solid #111"></div>
<div class="b" style="left:1294px;top:223px;width:305px;height:22px;background:#f4f4f4;border:1px solid #d8d8d8"></div>
<div class="t" id="t71" style="top:230.02px;font-size:11.5px;color:#707070;letter-spacing:0.288px;left:1420px;">Run Once</div>
<div class="b" style="left:1207px;top:250px;width:393px;height:22px;background:#fff;border:1px solid #dcdcdc"></div>
<div class="t" id="t72" style="top:256.02px;font-size:11.5px;color:#8a8a8a;font-style:italic;letter-spacing:0.033px;left:1213px;">Search for Property...  (Ctrl+P)</div>
<svg style="left:1549px;top:255px" width="14" height="14" viewBox="0 0 14 14"><circle cx="8.5" cy="5.5" r="4" fill="none" stroke="#666" stroke-width="1.3"/><path d="M5.5 8.5 L1.5 12.5" stroke="#666" stroke-width="1.8"/></svg>
<svg style="left:1569px;top:259px" width="8" height="5" viewBox="0 0 8 5"><path d="M0 0 H7.5 L3.75 4 Z" fill="#777"/></svg>
<svg style="left:1583px;top:254px" width="14" height="14" viewBox="0 0 14 14"><rect x="0.5" y="0.5" width="12.5" height="12.5" fill="#f6f6f6" stroke="#777"/><path d="M3 3 V11 M3 3.5 H5 M6 3.5 H11 M3 7 H5 M6 7 H11 M3 10.5 H5 M6 10.5 H11" stroke="#555" stroke-width="1"/></svg>
<div class="b" style="left:1205px;top:274px;width:397px;height:614px;background:#fff;border:1px solid #a8a8a8"></div>
<div class="b" style="left:1206px;top:275px;width:14px;height:612px;background:#f0f0f0"></div>
<div class="b" style="left:1584px;top:275px;width:17px;height:612px;background:#f0f0f0"></div>
<div class="b" style="left:1585px;top:277px;width:15px;height:14px;background:#fff;border:1px solid #d4d4d4"></div>
<svg style="left:1585px;top:277px" width="15" height="14" viewBox="0 0 15 14"><path d="M3.5 8.5 L7.5 4.5 L11.5 8.5 Z" fill="#c4c4c4"/></svg>
<div class="b" style="left:1585px;top:460px;width:15px;height:163px;background:#fff;border:1px solid #cdcdcd"></div>
<div class="b" style="left:1586px;top:871px;width:14px;height:14px;background:#fff;border:1px solid #d4d4d4"></div>
<svg style="left:1586px;top:871px" width="14" height="14" viewBox="0 0 14 14"><path d="M3 5 L7 9 L11 5 Z" fill="#c4c4c4"/></svg>
<div class="t" id="t73" style="top:280.65px;font-size:11.7px;color:#000;letter-spacing:0.267px;left:1234px;">Title Offset</div>
<div class="b" style="left:1241px;top:304px;width:336px;height:4px;background:#e7e7e7;border:1px solid #d6d6d6"></div>
<div class="b" style="left:1325px;top:297px;width:11px;height:17px;background:#f0f0f0;border:1px solid #b8b8b8"></div>
<div class="b" style="left:1240px;top:318px;width:341px;height:22px;background:#fff;border:1px solid #7a7a7a;border-right-color:#a0a0a0;border-bottom-color:#a0a0a0"></div>
<div class="t" id="t74" style="top:325.35px;font-size:11.7px;color:#000;left:1243px;">0.0800</div>
<div class="b" style="left:1220px;top:343px;width:364px;height:1px;background:#ececec"></div>
<div class="t" id="t75" style="top:349.05px;font-size:11.7px;color:#000;letter-spacing:0.061px;left:1235px;">Format Character</div>
<div class="b" style="left:1395px;top:344px;width:163px;height:22px;background:#fff;border:1px solid #a6a6a6;border-top-color:#8a8a8a"></div>
<div class="t" id="t76" style="top:347.05px;font-size:11.7px;color:#000;left:1398px;">n</div>
<svg style="left:1560px;top:348px" width="22" height="13" viewBox="0 0 22 13"><path d="M1 6.5 H21" stroke="#111" stroke-width="1.5"/><circle cx="10.5" cy="6.5" r="4.6" fill="#fff" stroke="#111" stroke-width="1.3"/><circle cx="10.5" cy="6.5" r="2.6" fill="#111"/></svg>
<div class="b" style="left:1220px;top:366px;width:364px;height:1px;background:#ececec"></div>
<div class="b" style="left:1232px;top:367px;width:161px;height:22px;background:#eeeeee"></div>
<div class="t" id="t77" style="top:372.75px;font-size:11.7px;color:#000;letter-spacing:0.379px;left:1235px;">Font Type</div>
<div class="b" style="left:1395px;top:367px;width:189px;height:22px;background:linear-gradient(#f0f0f0,#e6e6e6);border:1px solid #acacac"></div>
<div class="t" id="t78" style="top:372.65px;font-size:11.7px;color:#000;letter-spacing:-0.048px;left:1398.5px;">TrueType Fonts</div>
<svg style="left:1573px;top:376px" width="8" height="5" viewBox="0 0 8 5"><path d="M0 0 H7.5 L3.75 4 Z" fill="#222"/></svg>
<div class="b" style="left:1220px;top:389.5px;width:364px;height:1px;background:#ececec"></div>
<div class="t" id="t79" style="top:398.05px;font-size:11.7px;color:#000;letter-spacing:0.055px;left:1234px;">TrueType Font Style</div>
<svg style="left:1561.5px;top:393.2px" width="20" height="20" viewBox="-10 -10 20 20"><circle r="9" fill="#fff" stroke="#bdbdbd"/><path d="M-3.5 1.8 L0 -1.8 L3.5 1.8" stroke="#222" stroke-width="1.8" fill="none"/></svg>
<div class="t" id="t80" style="top:424.75px;font-size:11.7px;color:#000;letter-spacing:-0.085px;left:1239.5px;">Font:</div>
<div class="b" style="left:1303px;top:419px;width:278px;height:22px;background:linear-gradient(#f0f0f0,#e6e6e6);border:1px solid #acacac"></div>
<div class="t" id="t81" style="top:424.75px;font-size:11.7px;color:#000;letter-spacing:0.196px;left:1307.5px;">Calibri</div>
<svg style="left:1570px;top:429px" width="8" height="5" viewBox="0 0 8 5"><path d="M0 0 H7.5 L3.75 4 Z" fill="#222"/></svg>
<div class="t" id="t82" style="top:450.05px;font-size:11.7px;color:#000;letter-spacing:-0.085px;left:1239.5px;">Bold:</div>
<div class="b" style="left:1303px;top:447px;width:14px;height:14px;background:#fff;border:1px solid #8e8e8e"></div>
<div class="t" id="t83" style="top:471.65px;font-size:11.7px;color:#000;letter-spacing:0.170px;left:1239.5px;">Italic:</div>
<div class="b" style="left:1303px;top:469px;width:14px;height:14px;background:#fff;border:1px solid #8e8e8e"></div>
<div class="t" id="t84" style="top:493.65px;font-size:11.7px;color:#000;letter-spacing:0.272px;left:1239.5px;">Depth:</div>
<div class="b" style="left:1303px;top:491px;width:278px;height:22px;background:#fff;border:1px solid #7a7a7a;border-right-color:#a0a0a0;border-bottom-color:#a0a0a0"></div>
<div class="t" id="t85" style="top:496.85px;font-size:11.7px;color:#000;left:1306px;">0.00 %</div>
<div class="t" id="t86" style="top:521.45px;font-size:11.7px;color:#000;letter-spacing:-0.337px;left:1239.5px;">Bevel:</div>
<div class="b" style="left:1303px;top:519px;width:278px;height:22px;background:#fff;border:1px solid #7a7a7a;border-right-color:#a0a0a0;border-bottom-color:#a0a0a0"></div>
<div class="t" id="t87" style="top:525.05px;font-size:11.7px;color:#000;left:1306px;">0</div>
<div class="t" id="t88" style="top:549.25px;font-size:11.7px;color:#000;letter-spacing:-0.068px;left:1239.5px;">Resolution:</div>
<div class="b" style="left:1303px;top:547px;width:278px;height:22px;background:#fff;border:1px solid #c8c8c8;border-top-color:#a8a8a8"></div>
<div class="t" id="t89" style="top:549.55px;font-size:11.7px;color:#000;left:1306px;">3</div>
<svg style="left:1567px;top:548px" width="14" height="20" viewBox="0 0 14 20"><path d="M4 6 L7 3 L10 6 Z M4 13 L7 16 L10 13 Z" fill="#111"/><path d="M2 7.5 H11.5 V1 M2 18.5 H11.5 V12" stroke="#555" fill="none" stroke-width="0.8"/></svg>
<div class="b" style="left:1220px;top:571.5px;width:364px;height:1px;background:#ececec"></div>
<div class="b" style="left:1220px;top:572px;width:364px;height:24px;background:#fbfbfb"></div>
<div class="t" id="t90" style="top:578.85px;font-size:11.7px;color:#8c8c8c;letter-spacing:0.131px;left:1235px;">Line Font Style</div>
<div class="b" style="left:1395px;top:573px;width:189px;height:22px;background:#f4f4f4;border:1px solid #d2d2d2"></div>
<div class="t" id="t91" style="top:578.55px;font-size:11.7px;color:#8c8c8c;letter-spacing:-0.004px;left:1399px;">Single Line</div>
<svg style="left:1574px;top:582px" width="8" height="5" viewBox="0 0 8 5"><path d="M0 0 H7.5 L3.75 4 Z" fill="#9a9a9a"/></svg>
<div class="b" style="left:1220px;top:596px;width:364px;height:1px;background:#ececec"></div>
<div class="t" id="t92" style="top:604.15px;font-size:11.7px;color:#000;letter-spacing:0.002px;left:1234px;">3D Label Settings</div>
<svg style="left:1561.3px;top:598.9px" width="20" height="20" viewBox="-10 -10 20 20"><circle r="9" fill="#fff" stroke="#bdbdbd"/><path d="M-3.5 1.8 L0 -1.8 L3.5 1.8" stroke="#222" stroke-width="1.8" fill="none"/></svg>
<div class="t" id="t93" style="top:632.85px;font-size:11.7px;color:#000;letter-spacing:0.401px;left:1241.5px;">Height</div>
<div class="b" style="left:1341px;top:627px;width:238px;height:22px;background:#fff;border:1px solid #7a7a7a;border-right-color:#a0a0a0;border-bottom-color:#a0a0a0"></div>
<div class="t" id="t94" style="top:633.55px;font-size:11.7px;color:#000;left:1344px;">0.0500</div>
<div class="t" id="t95" style="top:664.75px;font-size:11.7px;color:#000;letter-spacing:0.268px;left:1241.5px;">Horizontal Alignment:</div>
<div class="t" id="t96" style="top:696.85px;font-size:11.7px;color:#000;letter-spacing:0.202px;left:1241.5px;">Vertical Alignment:</div>
<div class="t" id="t97" style="top:728.45px;font-size:11.7px;color:#000;letter-spacing:-0.199px;left:1241.5px;">Label Plane:</div>
<div class="t" id="t98" style="top:775.05px;font-size:11.7px;color:#000;letter-spacing:0.307px;left:1241px;">Orientation:</div>
<div class="b" style="left:1434px;top:659px;width:22px;height:22px;background:#a7c9e6;border:1px solid #3c82c0"></div>
<svg style="left:1434px;top:659px" width="22" height="22" viewBox="0 0 22 22"><rect x="5" y="5" width="12" height="1.2" fill="#333"/><rect x="5" y="7" width="8" height="1.2" fill="#333"/><rect x="5" y="9" width="12" height="1.2" fill="#333"/><rect x="5" y="11" width="8" height="1.2" fill="#333"/><rect x="5" y="13" width="12" height="1.2" fill="#333"/><rect x="5" y="15" width="8" height="1.2" fill="#333"/></svg>
<div class="b" style="left:1462px;top:659px;width:22px;height:22px;background:linear-gradient(#f2f2f2,#e4e4e4);border:1px solid #b4b4b4"></div>
<svg style="left:1462px;top:659px" width="22" height="22" viewBox="0 0 22 22"><rect x="5.5" y="5" width="12" height="1.2" fill="#333"/><rect x="7.5" y="7" width="8" height="1.2" fill="#333"/><rect x="5.5" y="9" width="12" height="1.2" fill="#333"/><rect x="7.5" y="11" width="8" height="1.2" fill="#333"/><rect x="5.5" y="13" width="12" height="1.2" fill="#333"/><rect x="7.5" y="15" width="8" height="1.2" fill="#333"/></svg>
<div class="b" style="left:1489px;top:659px;width:22px;height:22px;background:linear-gradient(#f2f2f2,#e4e4e4);border:1px solid #b4b4b4"></div>
<svg style="left:1489px;top:659px" width="22" height="22" viewBox="0 0 22 22"><rect x="6" y="5" width="12" height="1.2" fill="#333"/><rect x="10" y="7" width="8" height="1.2" fill="#333"/><rect x="6" y="9" width="12" height="1.2" fill="#333"/><rect x="10" y="11" width="8" height="1.2" fill="#333"/><rect x="6" y="13" width="12" height="1.2" fill="#333"/><rect x="10" y="15" width="8" height="1.2" fill="#333"/></svg>
<div class="b" style="left:1434px;top:691px;width:22px;height:22px;background:linear-gradient(#f2f2f2,#e4e4e4);border:1px solid #b4b4b4"></div>
<svg style="left:1434px;top:691px" width="22" height="22" viewBox="0 0 22 22"><rect x="6" y="6" width="10" height="1.2" fill="#444"/><rect x="8" y="8" width="6" height="1" fill="#777"/></svg>
<div class="b" style="left:1462px;top:691px;width:22px;height:22px;background:#a7c9e6;border:1px solid #3c82c0"></div>
<svg style="left:1462px;top:691px" width="22" height="22" viewBox="0 0 22 22"><rect x="6" y="10" width="10" height="1.2" fill="#444"/><rect x="8" y="12" width="6" height="1" fill="#777"/></svg>
<div class="b" style="left:1489px;top:691px;width:22px;height:22px;background:linear-gradient(#f2f2f2,#e4e4e4);border:1px solid #b4b4b4"></div>
<svg style="left:1489px;top:691px" width="22" height="22" viewBox="0 0 22 22"><rect x="6" y="15" width="10" height="1.2" fill="#444"/><rect x="8" y="17" width="6" height="1" fill="#777"/></svg>
<div class="b" style="left:1373px;top:723px;width:20px;height:22px;background:#a7c9e6;border:1px solid #3c82c0"></div>
<div class="t" id="t99" style="top:730.02px;font-size:11.5px;color:#000;left:1383px;transform:translateX(-50%);">XY</div>
<div class="b" style="left:1399px;top:723px;width:20px;height:22px;background:linear-gradient(#f2f2f2,#e4e4e4);border:1px solid #b4b4b4"></div>
<div class="t" id="t100" style="top:730.02px;font-size:11.5px;color:#000;left:1409px;transform:translateX(-50%);">ZX</div>
<div class="b" style="left:1425px;top:723px;width:20px;height:22px;background:linear-gradient(#f2f2f2,#e4e4e4);border:1px solid #b4b4b4"></div>
<div class="t" id="t101" style="top:730.02px;font-size:11.5px;color:#000;left:1435px;transform:translateX(-50%);">YZ</div>
<div class="b" style="left:1451px;top:723px;width:20px;height:22px;background:linear-gradient(#f2f2f2,#e4e4e4);border:1px solid #b4b4b4"></div>
<div class="t" id="t102" style="top:730.02px;font-size:11.5px;color:#000;left:1461px;transform:translateX(-50%);">YX</div>
<div class="b" style="left:1476px;top:723px;width:20px;height:22px;background:linear-gradient(#f2f2f2,#e4e4e4);border:1px solid #b4b4b4"></div>
<div class="t" id="t103" style="top:730.02px;font-size:11.5px;color:#000;left:1486px;transform:translateX(-50%);">XZ</div>
<div class="b" style="left:1502px;top:723px;width:20px;height:22px;background:linear-gradient(#f2f2f2,#e4e4e4);border:1px solid #b4b4b4"></div>
<div class="t" id="t104" style="top:730.02px;font-size:11.5px;color:#000;left:1512px;transform:translateX(-50%);">ZY</div>
<div class="b" style="left:1427px;top:755px;width:30px;height:22px;background:linear-gradient(#f2f2f2,#e4e4e4);border:1px solid #b4b4b4"></div>
<div class="t" id="t105" style="top:762.02px;font-size:11.5px;color:#000;left:1442px;transform:translateX(-50%);">-Y</div>
<div class="b" style="left:1463px;top:755px;width:30px;height:22px;background:linear-gradient(#f2f2f2,#e4e4e4);border:1px solid #b4b4b4"></div>
<div class="t" id="t106" style="top:762.02px;font-size:11.5px;color:#000;left:1478px;transform:translateX(-50%);">-X</div>
<div class="b" style="left:1427px;top:783px;width:30px;height:22px;background:#a7c9e6;border:1px solid #3c82c0"></div>
<div class="t" id="t107" style="top:790.02px;font-size:11.5px;color:#000;left:1442px;transform:translateX(-50%);">+X</div>
<div class="b" style="left:1463px;top:783px;width:30px;height:22px;background:linear-gradient(#f2f2f2,#e4e4e4);border:1px solid #b4b4b4"></div>
<div class="t" id="t108" style="top:790.02px;font-size:11.5px;color:#000;left:1478px;transform:translateX(-50%);">+Y</div>
<div class="b" style="left:1220px;top:810px;width:364px;height:1px;background:#ececec"></div>
<div class="b" style="left:1220px;top:812px;width:364px;height:25px;background:#fff"></div>
<div class="t" id="t109" style="top:818.75px;font-size:11.7px;color:#6a6a6a;letter-spacing:-0.085px;left:1234px;">Forward Facing Style</div>
<svg style="left:1561.2px;top:814px" width="20" height="20" viewBox="-10 -10 20 20"><circle r="9" fill="#fff" stroke="#bdbdbd"/><path d="M-3.5 -1.8 L0 1.8 L3.5 -1.8" stroke="#222" stroke-width="1.8" fill="none"/></svg>
<div class="b" style="left:1220px;top:837px;width:364px;height:1px;background:#ececec"></div>
<div class="t" id="t110" style="top:843.35px;font-size:11.7px;color:#000;letter-spacing:0.308px;left:1235px;">Width Height Aspect</div>
<div class="b" style="left:1395px;top:838px;width:189px;height:22px;background:#fff;border:1px solid #7a7a7a;border-right-color:#a0a0a0;border-bottom-color:#a0a0a0"></div>
<div class="t" id="t111" style="top:843.85px;font-size:11.7px;color:#000;left:1398px;">1.33</div>
<div class="b" style="left:1220px;top:860.5px;width:364px;height:1px;background:#ececec"></div>
<div class="t" id="t112" style="top:866.55px;font-size:11.7px;color:#000;letter-spacing:0.147px;left:1235px;">Position Around Scale</div>
<div class="b" style="left:1395px;top:861.5px;width:189px;height:22px;background:linear-gradient(#f0f0f0,#e4e4e4);border:1px solid #acacac"></div>
<div class="t" id="t113" style="top:866.85px;font-size:11.7px;color:#000;letter-spacing:0.199px;left:1399px;">Right Front</div>
<svg style="left:1575px;top:872px" width="8" height="5" viewBox="0 0 8 5"><path d="M0 0 H7.5 L3.75 4 Z" fill="#222"/></svg>
<div class="b" style="left:1220px;top:884px;width:364px;height:3px;background:#fff;border-top:1px solid #ececec"></div>
<div class="b" style="left:1395px;top:884px;width:189px;height:3px;border:1px solid #c0c0c0;border-bottom:none"></div>
<div class="b" style="left:1205px;top:888px;width:397px;height:3px;background:#f0f0f0"></div>
<div class="b" style="left:1205px;top:891px;width:397px;height:97px;background:#e6e6e6;border:1px solid #a8a8a8;border-right-color:#c8c8c8"></div>
<div class="t" id="t114" style="top:894.65px;font-size:11.7px;color:#000;font-weight:bold;letter-spacing:0.166px;left:1206.5px;">Font Type</div>
<div class="t" id="t115" style="top:913.05px;font-size:11.7px;color:#000;letter-spacing:0.067px;left:1206.5px;">The Label Type allows the user to select between three font types. Forward</div>
<div class="t" id="t116" style="top:928.75px;font-size:11.7px;color:#000;letter-spacing:0.055px;left:1206.5px;">Facing Fonts will always be aligned to the View.  TrueType fonts are</div>
<div class="t" id="t117" style="top:944.85px;font-size:11.7px;color:#000;letter-spacing:0.190px;left:1206.5px;">standard fonts.  Line fonts are low impact fonts which perform better</div>
<div class="t" id="t118" style="top:960.75px;font-size:11.7px;color:#000;letter-spacing:0.115px;left:1206.5px;">when large numbers of labels are generated.</div>
<div class="b" style="left:1225px;top:365px;width:364px;height:31px;background:#ffff57;mix-blend-mode:multiply"></div>
<div class="b" style="left:1286px;top:414px;width:306px;height:36px;background:#ffff57;mix-blend-mode:multiply"></div>
<div class="b" style="left:0px;top:995px;width:1610px;height:23px;background:#0078d7"></div>
<div class="t" id="t119" style="top:1001.52px;font-size:11.5px;color:#fff;letter-spacing:0.005px;left:16px;">Version 2019.10.1</div>
<div class="t" id="t120" style="top:1001.62px;font-size:11.5px;color:#fff;letter-spacing:0.217px;left:1291px;">Copyright © 2019 - </div>
<div class="t" id="t121" style="top:1001.62px;font-size:11.5px;color:#fff;text-decoration:underline;letter-spacing:0.254px;left:1397.6px;">C Tech Development Corporation</div>
<svg style="left:1593px;top:1000px" width="16" height="16" viewBox="0 0 16 16"><g fill="#a8cdf0"><rect x="10" y="2" width="2" height="2"/><rect x="6" y="6" width="2" height="2"/><rect x="10" y="6" width="2" height="2"/><rect x="2" y="10" width="2" height="2"/><rect x="6" y="10" width="2" height="2"/><rect x="10" y="10" width="2" height="2"/></g></svg>
<svg style="left:0;top:0" width="1610" height="1018">
<defs><filter id="sh" x="-20%" y="-20%" width="140%" height="160%"><feGaussianBlur in="SourceAlpha" stdDeviation="1.8"/><feOffset dx="1.5" dy="2.5"/><feComponentTransfer><feFuncA type="linear" slope="0.42"/></feComponentTransfer><feMerge><feMergeNode/><feMergeNode in="SourceGraphic"/></feMerge></filter></defs>
<g filter="url(#sh)" fill="#4d7dcc">
<path d="M322 384 L130 297" stroke="#4d7dcc" stroke-width="9" stroke-linecap="round"/>
<path d="M103 285 L136 283.5 L123.5 310 Z"/>
<path d="M1139 445 L1195 419" stroke="#4d7dcc" stroke-width="8" stroke-linecap="round"/>
<path d="M1222.5 406.5 L1189 405 L1201.5 432.5 Z"/>
<path d="M1486 404.5 L1514 403.5" stroke="#4d7dcc" stroke-width="10" stroke-linecap="round"/>
<path d="M1541.5 402.5 L1511.5 389 L1512.5 418.5 Z"/>
</g></svg>
</body></html>
